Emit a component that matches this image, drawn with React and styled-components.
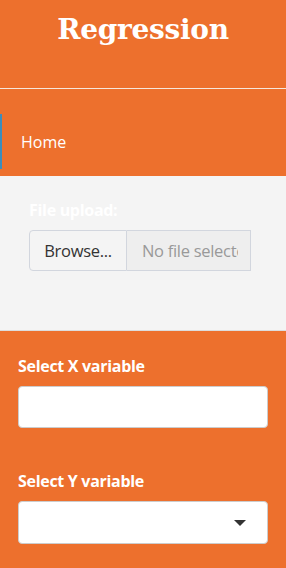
import styled, { createGlobalStyle } from "styled-components";

const Global = createGlobalStyle`
  html, body {
    margin: 0;
    padding: 0;
    background: #ed702d;
  }
  * {
    box-sizing: border-box;
  }
`;

const Sidebar = styled.aside`
  width: 286px;
  height: 568px;
  background: #ed702d;
  font-family: "Open Sans", "Lato", sans-serif;
  color: #fff;
  overflow: hidden;
`;

const Header = styled.header`
  height: 89px;
  border-bottom: 1px solid #f6e6dc;
  display: flex;
  justify-content: center;
  padding-top: 11px;
`;

const Title = styled.h1`
  margin: 0;
  font-family: "DejaVu Serif", "Liberation Serif", serif;
  font-weight: bold;
  font-size: 28px;
  line-height: 38px;
  letter-spacing: -0.3px;
`;

const Menu = styled.nav`
  padding-top: 25px;
`;

const MenuItem = styled.a`
  display: flex;
  align-items: center;
  height: 55px;
  padding-left: 19px;
  border-left: 2px solid ${({ active }) => (active ? "#3c8dbc" : "transparent")};
  font-family: "Open Sans", "Liberation Sans", sans-serif;
  font-size: 16px;
  color: #fff;
  text-decoration: none;
`;

const Panel = styled.section`
  margin-top: 7px;
  height: 155px;
  background: #f4f4f4;
  border-bottom: 1px solid #ddd;
  padding: 24px 29px 0;
`;

const Label = styled.label`
  display: block;
  font-weight: bold;
  font-size: 16px;
  line-height: 20px;
  letter-spacing: -0.3px;
  color: #fff;
  margin-bottom: 10px;
`;

const FileGroup = styled.div`
  display: flex;
  width: 222px;
  height: 41px;
`;

const BrowseButton = styled.button`
  flex: 0 0 98px;
  height: 41px;
  border: 1px solid #d2d6de;
  border-radius: 4px 0 0 4px;
  background: #f4f4f4;
  font-family: "Open Sans", "Lato", sans-serif;
  font-size: 16.5px;
  letter-spacing: -0.3px;
  color: #333;
  padding: 0;
`;

const FileName = styled.div`
  flex: 1 1 0;
  min-width: 0;
  border: 1px solid #d2d6de;
  border-left: none;
  background: #eee;
  display: flex;
  align-items: center;
  padding: 0 12px 0 15px;
`;

const FileText = styled.span`
  display: block;
  width: 100%;
  overflow: hidden;
  white-space: nowrap;
  color: #999;
  font-size: 16.5px;
  letter-spacing: -0.3px;
`;

const Fields = styled.div`
  padding: 25px 18px 0;
`;

const Field = styled.div`
  margin-bottom: ${({ mb }) => mb || 0}px;
`;

const Box = styled.div`
  position: relative;
  width: 250px;
  height: ${({ h }) => h || 42}px;
  background: #fff;
  border: 1px solid #ccc;
  border-radius: 4px;
`;

const Caret = styled.span`
  position: absolute;
  right: 21px;
  top: 18px;
  width: 0;
  height: 0;
  border-left: 6px solid transparent;
  border-right: 6px solid transparent;
  border-top: 6px solid #333;
`;

export default function App() {
  return (
    <>
      <Global />
      <Sidebar>
        <Header>
          <Title>Regression</Title>
        </Header>
        <Menu>
          <MenuItem active href="#">Home</MenuItem>
        </Menu>
        <Panel>
          <Label>File upload:</Label>
          <FileGroup>
            <BrowseButton>Browse...</BrowseButton>
            <FileName>
              <FileText>No file selected</FileText>
            </FileName>
          </FileGroup>
        </Panel>
        <Fields>
          <Field mb={43}>
            <Label>Select X variable</Label>
            <Box />
          </Field>
          <Field>
            <Label>Select Y variable</Label>
            <Box h={43}>
              <Caret />
            </Box>
          </Field>
        </Fields>
      </Sidebar>
    </>
  );
}
